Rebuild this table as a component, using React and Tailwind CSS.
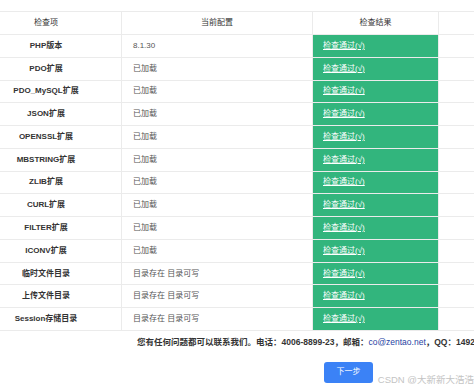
import React from "react";

const rows = [
  ["PHP版本", "8.1.30"],
  ["PDO扩展", "已加载"],
  ["PDO_MySQL扩展", "已加载"],
  ["JSON扩展", "已加载"],
  ["OPENSSL扩展", "已加载"],
  ["MBSTRING扩展", "已加载"],
  ["ZLIB扩展", "已加载"],
  ["CURL扩展", "已加载"],
  ["FILTER扩展", "已加载"],
  ["ICONV扩展", "已加载"],
  ["临时文件目录", "目录存在 目录可写"],
  ["上传文件目录", "目录存在 目录可写"],
  ["Session存储目录", "目录存在 目录可写"],
];

export default function App() {
  return (
    <div
      className="w-[474px] h-[384px] overflow-hidden bg-white relative"
      style={{ fontFamily: '"Liberation Sans", "Noto Sans CJK SC", sans-serif' }}
    >
      <div className="pt-[11px] ml-[-29px] w-[540px]">
        <div className="border-t border-[#ebebeb]">
          <div className="grid grid-cols-[151px_191px_126px_1fr] h-[23px] border-b border-[#ebebeb] text-[8px] text-[#333]">
            <div className="flex items-center justify-center border-r border-[#ebebeb]">检查项</div>
            <div className="flex items-center justify-center border-r border-[#ebebeb]">当前配置</div>
            <div className="flex items-center justify-center border-r border-[#ebebeb]">检查结果</div>
            <div></div>
          </div>
          {rows.map(([a, b]) => (
            <div
              key={a}
              className="grid grid-cols-[151px_191px_126px_1fr] h-[22.77px] border-b border-[#ebebeb] text-[8px]"
            >
              <div className="flex items-center justify-center border-r border-[#ebebeb] font-bold text-[#333]">
                {a}
              </div>
              <div className="flex items-center pl-[11px] border-r border-[#ebebeb] text-[#555]">{b}</div>
              <div className="flex items-center pl-[10px] bg-[#32b57d] border-r border-[#ebebeb] text-white">
                <span className="underline underline-offset-1">检查通过(√)</span>
              </div>
              <div></div>
            </div>
          ))}
        </div>
      </div>
      <div className="pl-[137px] pt-[5px] whitespace-nowrap text-[8.5px] font-bold text-[#333] leading-[12px]">
        您有任何问题都可以联系我们。电话：4006-8899-23，邮箱：
        <span className="text-[#1f43a3] font-normal">co@zentao.net</span>，QQ：1492153599
      </div>
      <div className="flex items-end pl-[324px] pt-[14px]">
        <button className="w-[54px] h-[21px] rounded-[3px] bg-[#3b82f6] text-white text-[8px] flex items-center justify-center">
          下一步
        </button>
        <span className="ml-[5px] mb-[-4px] text-[9.5px] text-[#c4c4c4] whitespace-nowrap">CSDN @大新新大浩浩</span>
      </div>
    </div>
  );
}
